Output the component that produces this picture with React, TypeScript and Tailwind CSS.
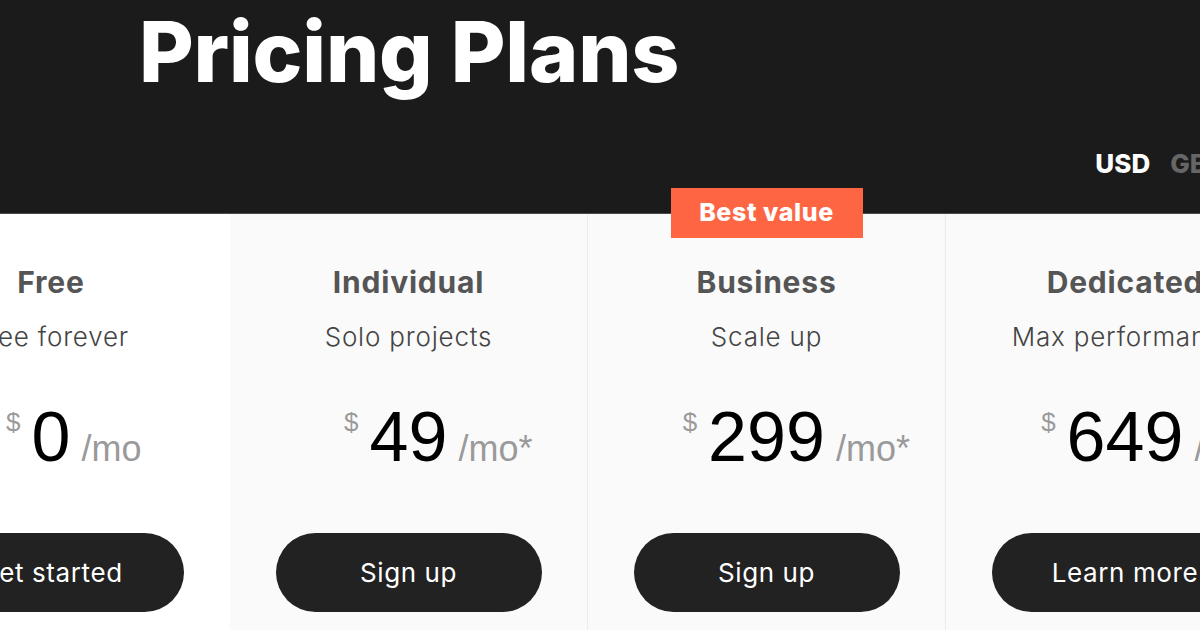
import React from "react";

type Plan = {
  name: string;
  tagline: string;
  price: string;
  unit: string;
  cta: string;
  tint: boolean;
  divider: boolean;
  badge?: string;
};

const PLANS: Plan[] = [
  {
    name: "Free",
    tagline: "Free forever",
    price: "0",
    unit: "/mo",
    cta: "Get started",
    tint: false,
    divider: false,
  },
  {
    name: "Individual",
    tagline: "Solo projects",
    price: "49",
    unit: "/mo*",
    cta: "Sign up",
    tint: true,
    divider: true,
  },
  {
    name: "Business",
    tagline: "Scale up",
    price: "299",
    unit: "/mo*",
    cta: "Sign up",
    tint: true,
    divider: true,
    badge: "Best value",
  },
  {
    name: "Dedicated",
    tagline: "Max performance",
    price: "649",
    unit: "/mo*",
    cta: "Learn more",
    tint: true,
    divider: false,
  },
];

function PlanColumn({ plan }: { plan: Plan }) {
  return (
    <div
      className={
        "relative flex w-[358px] shrink-0 flex-col items-center pt-[51px] " +
        (plan.tint ? "bg-[#fafafa] " : "bg-white ") +
        (plan.divider ? "border-r border-[#ececec]" : "")
      }
    >
      {plan.badge && (
        <div className="absolute top-[-26px] left-1/2 flex h-[50px] w-[192px] -translate-x-1/2 items-center justify-center bg-[#fe6643] text-[25px] font-extrabold tracking-[0.6px] text-white">
          {plan.badge}
        </div>
      )}

      <h2 className="text-[30px] leading-[34px] font-bold tracking-[0.8px] whitespace-nowrap text-[#555555]">
        {plan.name}
      </h2>
      <p className="mt-[22px] text-[26px] leading-[32px] font-light tracking-[0.8px] whitespace-nowrap text-[#444444]">
        {plan.tagline}
      </p>

      <div className="mt-[49px] grid w-full grid-cols-[1fr_auto_1fr] items-baseline font-['Liberation_Sans',Arial,sans-serif]">
        <span className="mt-[7px] mr-[11px] self-start justify-self-end text-[26px] leading-none text-[#9a9a9a]">
          $
        </span>
        <span className="text-[70px] leading-none text-black">
          {plan.price}
        </span>
        <span className="ml-[11px] text-[36px] leading-none whitespace-nowrap text-[#9a9a9a]">
          {plan.unit}
        </span>
      </div>

      <button className="mt-[61px] flex h-[79px] w-[266px] items-center justify-center rounded-full bg-[#222222] text-[26px] tracking-[0.6px] whitespace-nowrap text-white">
        {plan.cta}
      </button>
    </div>
  );
}

export default function App() {
  return (
    <div className="h-[630px] w-[1200px] overflow-hidden bg-white font-['Inter',sans-serif]">
      <header className="flex h-[214px] w-[1320px] flex-col border-b border-[#4a4a4a] bg-[#1b1b1b] pt-[10px] pl-[139px]">
        <h1 className="text-[84px] leading-none font-extrabold tracking-[-0.2px] text-white">
          Pricing Plans
        </h1>
        <div className="mt-[57px] flex justify-end gap-[20px] pr-[96px] text-[26px] leading-none font-extrabold">
          <span className="text-white">USD</span>
          <span className="text-[#666666]">GBP</span>
        </div>
      </header>

      <div className="ml-[-128px] flex h-[416px]">
        {PLANS.map((p) => (
          <PlanColumn key={p.name} plan={p} />
        ))}
      </div>
    </div>
  );
}
